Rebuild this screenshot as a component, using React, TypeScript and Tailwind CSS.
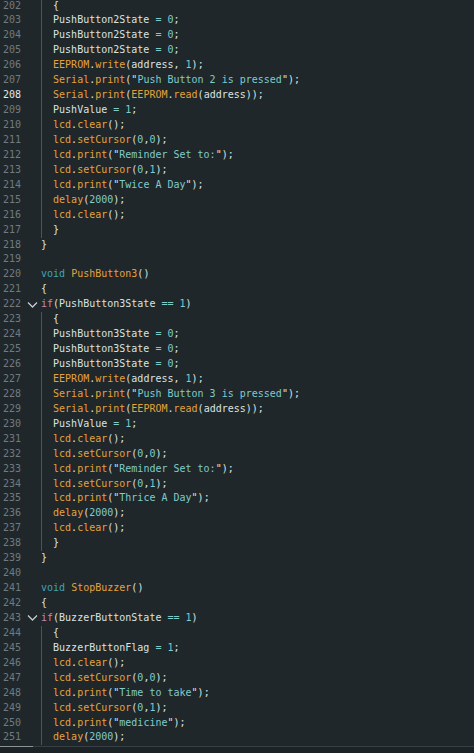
import React from "react";

type Line = { n: number; code: string; fold?: boolean; guide?: boolean };

const raw: [number, string, boolean?][] = [
  [202, "  {"],
  [203, "  PushButton2State = 0;"],
  [204, "  PushButton2State = 0;"],
  [205, "  PushButton2State = 0;"],
  [206, "  EEPROM.write(address, 1);"],
  [207, '  Serial.print("Push Button 2 is pressed");'],
  [208, "  Serial.print(EEPROM.read(address));"],
  [209, "  PushValue = 1;"],
  [210, "  lcd.clear();"],
  [211, "  lcd.setCursor(0,0);"],
  [212, '  lcd.print("Reminder Set to:");'],
  [213, "  lcd.setCursor(0,1);"],
  [214, '  lcd.print("Twice A Day");'],
  [215, "  delay(2000);"],
  [216, "  lcd.clear();"],
  [217, "  }"],
  [218, "}"],
  [219, ""],
  [220, "void PushButton3()"],
  [221, "{"],
  [222, "if(PushButton3State == 1)", true],
  [223, "  {"],
  [224, "  PushButton3State = 0;"],
  [225, "  PushButton3State = 0;"],
  [226, "  PushButton3State = 0;"],
  [227, "  EEPROM.write(address, 1);"],
  [228, '  Serial.print("Push Button 3 is pressed");'],
  [229, "  Serial.print(EEPROM.read(address));"],
  [230, "  PushValue = 1;"],
  [231, "  lcd.clear();"],
  [232, "  lcd.setCursor(0,0);"],
  [233, '  lcd.print("Reminder Set to:");'],
  [234, "  lcd.setCursor(0,1);"],
  [235, '  lcd.print("Thrice A Day");'],
  [236, "  delay(2000);"],
  [237, "  lcd.clear();"],
  [238, "  }"],
  [239, "}"],
  [240, ""],
  [241, "void StopBuzzer()"],
  [242, "{"],
  [243, "if(BuzzerButtonState == 1)", true],
  [244, "  {"],
  [245, "  BuzzerButtonFlag = 1;"],
  [246, "  lcd.clear();"],
  [247, "  lcd.setCursor(0,0);"],
  [248, '  lcd.print("Time to take");'],
  [249, "  lcd.setCursor(0,1);"],
  [250, '  lcd.print("medicine");'],
  [251, "  delay(2000);"],
];

const lines: Line[] = raw.map(([n, code, fold]) => ({
  n,
  code,
  fold,
  guide: code.startsWith("  "),
}));

const ORANGE = new Set([
  "EEPROM",
  "Serial",
  "lcd",
  "write",
  "print",
  "read",
  "clear",
  "setCursor",
  "delay",
  "PushButton3",
  "StopBuzzer",
]);

const cls = {
  plain: "text-[#dae3e3]",
  orange: "text-[#e5a23c]",
  teal: "text-[#7fcbcd]",
  purple: "text-[#c586c0]",
  kw: "text-[#3fa5b5]",
  brace: "text-[#dae3e3]",
};

function tokenize(s: string): { t: string; c: string }[] {
  const out: { t: string; c: string }[] = [];
  const re = /("[^"]*")|([A-Za-z_][A-Za-z0-9_]*)|(\d+)|(==|=)|(\s+)|(.)/g;
  let m: RegExpExecArray | null;
  while ((m = re.exec(s))) {
    if (m[1]) {
      out.push({ t: '"', c: cls.plain });
      out.push({ t: m[1].slice(1, -1), c: cls.teal });
      out.push({ t: '"', c: cls.plain });
    } else if (m[2]) {
      const w = m[2];
      if (w === "if") out.push({ t: w, c: cls.purple });
      else if (w === "void") out.push({ t: w, c: cls.kw });
      else if (ORANGE.has(w)) out.push({ t: w, c: cls.orange });
      else out.push({ t: w, c: cls.plain });
    } else if (m[3]) out.push({ t: m[3], c: cls.teal });
    else if (m[4]) out.push({ t: m[4], c: cls.teal });
    else if (m[5]) out.push({ t: m[5], c: cls.plain });
    else out.push({ t: m[6], c: cls.plain });
  }
  return out;
}

function Chevron() {
  return (
    <svg width="11" height="8" viewBox="0 0 11 8" className="block">
      <path d="M1 1.5 L5.5 6 L10 1.5" fill="none" stroke="#c5cbce" strokeWidth="1.3" />
    </svg>
  );
}

export default function App() {
  return (
    <div
      className="w-[474px] h-[753px] bg-[#1f272a] flex flex-col overflow-hidden"
      style={{ fontFamily: '"DejaVu Sans Mono", "Liberation Mono", monospace' }}
    >
      <div className="h-[746px] overflow-hidden">
        <div className="-mt-[1.5px] flex flex-col">
          {lines.map((l) => (
            <div key={l.n} className="flex h-[14.94px] leading-[14.94px] text-[10px] whitespace-pre">
              <div
                className={
                  "w-[21px] text-right " +
                  (l.n === 208 ? "text-[#e6e9ea]" : "text-[#6f7b80]")
                }
              >
                {l.n}
              </div>
              <div className="w-[20px] flex items-center justify-end pr-[3px]">
                {l.fold ? <Chevron /> : null}
              </div>
              <div className="relative flex-1">
                {l.guide ? (
                  <div className="absolute left-0 top-0 bottom-0 w-px bg-[#4b5458]" />
                ) : null}
                {tokenize(l.code).map((tk, i) => (
                  <span key={i} className={tk.c}>
                    {tk.t}
                  </span>
                ))}
              </div>
            </div>
          ))}
        </div>
      </div>
      <div className="h-px bg-[#363f43] flex">
        <div className="w-[33px] bg-[#8c9396]" />
      </div>
      <div className="flex-1 bg-[#1c2326]" />
    </div>
  );
}
